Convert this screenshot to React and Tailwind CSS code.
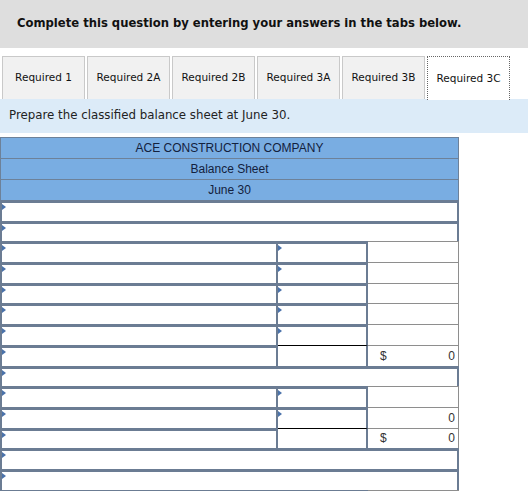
const tabs = ['Required 1', 'Required 2A', 'Required 2B', 'Required 3A', 'Required 3B', 'Required 3C']

// c = column layout of each body row
// full: one wide input, split: label input + amount input + empty col, total: label + total col with $ 0
const rows = [
  { t: 'full' },
  { t: 'full' },
  { t: 'split' },
  { t: 'split' },
  { t: 'split' },
  { t: 'split' },
  { t: 'split' },
  { t: 'total', dollar: true, value: '0' },
  { t: 'full' },
  { t: 'split' },
  { t: 'split', value: '0' },
  { t: 'total', dollar: true, value: '0' },
  { t: 'full' },
  { t: 'full' },
  { t: 'split' },
]

function Arrow() {
  return (
    <span className="absolute left-0 top-[1px] h-0 w-0 border-y-[3px] border-l-[4px] border-y-transparent border-l-[#4a72aa]" />
  )
}

function Row({ row }) {
  if (row.t === 'full') {
    return (
      <div className="flex h-[20.7px]">
        <div className="relative flex-1 border-t-[3px] border-r-2 border-[#6b7c93] bg-white">
          <Arrow />
        </div>
      </div>
    )
  }
  const total = row.t === 'total'
  return (
    <div className="flex h-[20.7px]">
      <div className="relative w-[276px] border-t-[3px] border-r-2 border-[#6b7c93] bg-white">
        <Arrow />
      </div>
      <div
        className={
          total
            ? 'w-[90px] border-t border-r-2 border-t-black border-r-[#6b7c93] bg-white'
            : 'relative w-[90px] border-t-[3px] border-r-2 border-[#6b7c93] bg-white'
        }
      >
        {!total && <Arrow />}
      </div>
      <div className="flex flex-1 items-center justify-between border-t border-r border-[#8e8e8e] bg-white px-[3px] pl-[12px] text-[12px] text-[#333]">
        <span>{row.dollar ? '$' : ''}</span>
        <span>{row.value || ''}</span>
      </div>
    </div>
  )
}

export default function App() {
  return (
    <div className="h-[491px] w-[528px] overflow-hidden bg-white font-['DejaVu_Sans',sans-serif]">
      <div className="flex h-[48px] items-center bg-[#dedede] pl-[17px] text-[11.6px] font-bold text-[#111]">
        Complete this question by entering your answers in the tabs below.
      </div>

      <div className="mt-[8px] flex h-[43px] gap-[2px] pl-[2px]">
        {tabs.map((tab, i) =>
          i === tabs.length - 1 ? (
            <div
              key={tab}
              className="relative z-10 flex h-[44px] w-[83px] items-center justify-center border border-b-0 border-dotted border-[#666] bg-white text-[10.5px] text-[#111]"
            >
              {tab}
            </div>
          ) : (
            <div
              key={tab}
              className="flex w-[83px] items-center justify-center border border-b-0 border-[#c9c9c9] bg-[#f1f1f1] text-[10.5px] text-[#111]"
            >
              {tab}
            </div>
          )
        )}
      </div>

      <div className="flex h-[34px] items-center bg-[#dcebf8] pl-[9px] text-[11.8px] text-[#222]">
        Prepare the classified balance sheet at June 30.
      </div>

      <div className="mt-[4px] w-[459px] font-['Liberation_Sans',Arial,sans-serif]">
        <div className="border-x border-t border-[#6d8199] bg-[#79ade2] text-center text-[12px] text-[#13213d]">
          <div className="flex h-[21px] items-center justify-center border-b border-[#6d8199]">ACE CONSTRUCTION COMPANY</div>
          <div className="flex h-[21px] items-center justify-center border-b border-[#6d8199]">Balance Sheet</div>
          <div className="flex h-[20px] items-center justify-center">June 30</div>
        </div>
        <div className="border-l-2 border-[#6b7c93]">
          {rows.map((row, i) => (
            <Row key={i} row={row} />
          ))}
        </div>
      </div>
    </div>
  )
}
